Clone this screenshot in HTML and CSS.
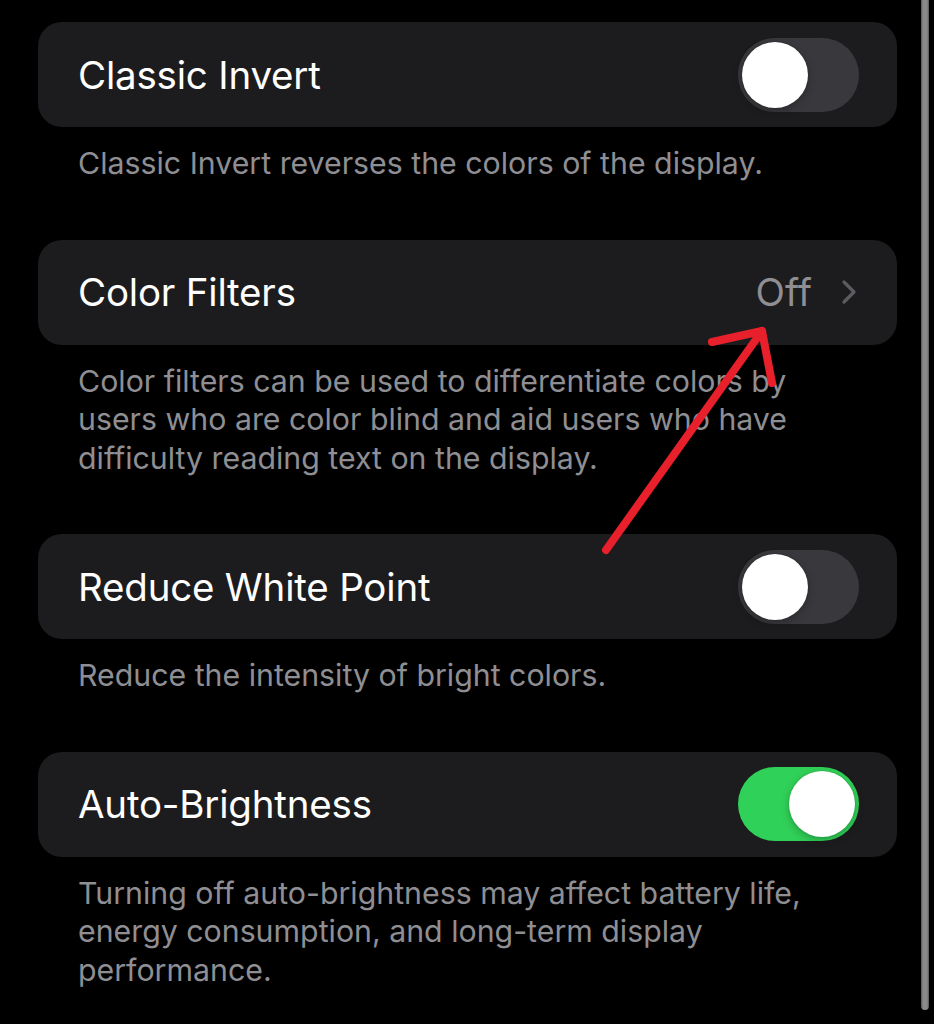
FILE: index.html
```html
<!DOCTYPE html>
<html>
<head>
<meta charset="utf-8">
<link rel="stylesheet" href="styles.css">
</head>
<body>
<div class="page">
  <div class="card">
    <span class="title">Classic Invert</span>
    <span class="toggle"><span class="knob"></span></span>
  </div>
  <p class="footer">Classic Invert reverses the colors of the display.</p>

  <div class="card">
    <span class="title">Color Filters</span>
    <span class="value">Off<svg class="chev" width="16" height="26" viewBox="0 0 16 26"><path d="M3 3 L13 13 L3 23" fill="none" stroke="#5b5b60" stroke-width="3.2" stroke-linecap="round" stroke-linejoin="round"/></svg></span>
  </div>
  <p class="footer">Color filters can be used to differentiate colors by users who are color blind and aid users who have difficulty reading text on the display.</p>

  <div class="card">
    <span class="title">Reduce White Point</span>
    <span class="toggle"><span class="knob"></span></span>
  </div>
  <p class="footer">Reduce the intensity of bright colors.</p>

  <div class="card">
    <span class="title">Auto-Brightness</span>
    <span class="toggle on"><span class="knob"></span></span>
  </div>
  <p class="footer">Turning off auto-brightness may affect battery life, energy consumption, and long-term display performance.</p>
</div>
<div class="scrollbar"></div>
<svg class="arrow" width="934" height="1024" viewBox="0 0 934 1024">
  <g fill="none" stroke="#e8202b" stroke-width="8" stroke-linecap="round" stroke-linejoin="round">
    <path d="M606 550 L762 331"/>
    <path d="M712 342 L762 331 L772 383"/>
  </g>
</svg>
</body>
</html>
```
FILE: styles.css
```css
html, body {
  margin: 0;
  padding: 0;
  background: #000;
}
body {
  width: 934px;
  height: 1024px;
  overflow: hidden;
  position: relative;
  font-family: Inter, "Noto Sans", "Liberation Sans", sans-serif;
}
.page {
  padding: 22px 37px 0 38px;
  width: 859px;
}
.card {
  height: 105px;
  background: #1c1c1e;
  border-radius: 24px;
  display: flex;
  align-items: center;
  justify-content: space-between;
  padding: 0 38px 0 40px;
  box-sizing: border-box;
}
.title {
  color: #fff;
  font-size: 38.5px;
  letter-spacing: -0.2px;
}
.value {
  color: #8e8e93;
  font-size: 38.5px;
  display: flex;
  align-items: center;
  gap: 29px;
  margin-right: 2px;
}
.chev {
  display: block;
}
.footer {
  margin: 0;
  padding: 17px 40px 57px 40px;
  color: #8e8e93;
  font-size: 30.3px;
  line-height: 38.5px;
}
.toggle {
  width: 121px;
  height: 74px;
  border-radius: 37px;
  background: #39393d;
  display: flex;
  align-items: center;
  padding: 0 4px;
  box-sizing: border-box;
}
.toggle.on {
  background: #30d158;
  justify-content: flex-end;
}
.knob {
  width: 66px;
  height: 66px;
  border-radius: 50%;
  background: #fff;
  box-shadow: 0 3px 8px rgba(0,0,0,0.25), 0 0 0 1px rgba(0,0,0,0.06);
}
.scrollbar {
  position: absolute;
  left: 921px;
  top: 0;
  width: 8px;
  height: 1010px;
  border-radius: 0 0 4px 4px;
  background: linear-gradient(to right, #555 0, #8a8a8a 25%, #8a8a8a 75%, #555 100%);
}
.arrow {
  position: absolute;
  left: 0;
  top: 0;
  pointer-events: none;
}
```
